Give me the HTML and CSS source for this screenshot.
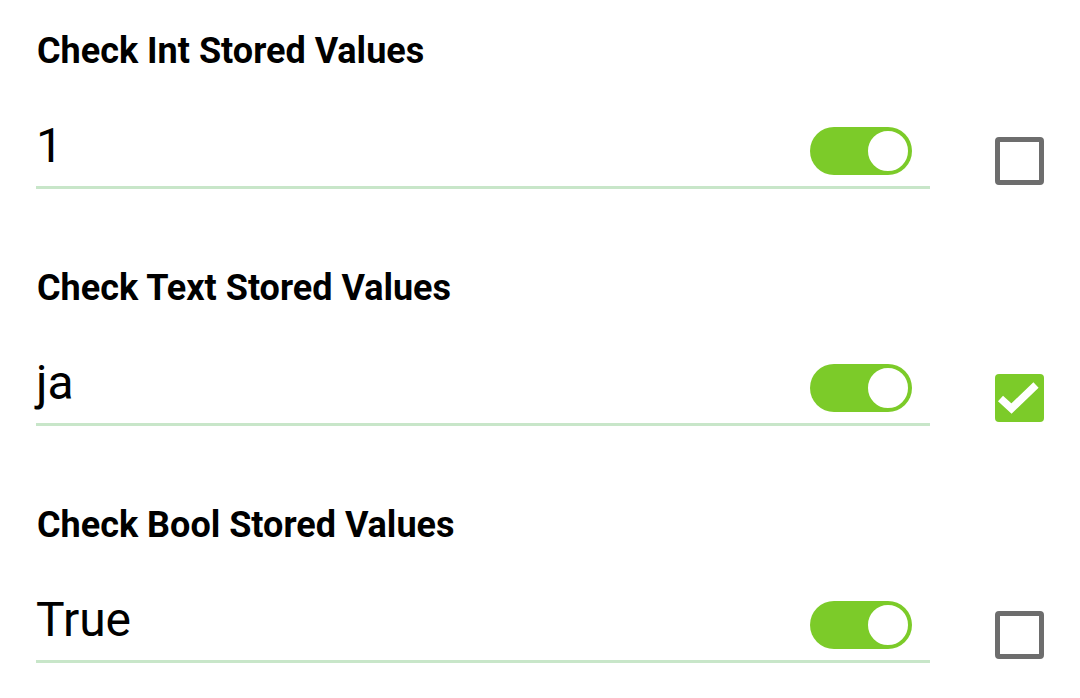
FILE: index.html
```html
<!DOCTYPE html>
<html>
<head>
<meta charset="utf-8">
<link rel="stylesheet" href="styles.css">
</head>
<body>
<div class="page">
  <section class="group">
    <div class="label">Check Int Stored Values</div>
    <div class="row">
      <div class="field">
        <span class="value">1</span>
        <span class="toggle"><span class="knob"></span></span>
      </div>
      <span class="check"></span>
    </div>
  </section>
  <section class="group">
    <div class="label">Check Text Stored Values</div>
    <div class="row">
      <div class="field">
        <span class="value">ja</span>
        <span class="toggle"><span class="knob"></span></span>
      </div>
      <span class="check checked">
        <svg viewBox="0 0 49 48" width="49" height="48"><path d="M5.5 24.5 L16.5 34.5 L41 11" fill="none" stroke="#fff" stroke-width="7.5" stroke-linejoin="miter"/></svg>
      </span>
    </div>
  </section>
  <section class="group">
    <div class="label">Check Bool Stored Values</div>
    <div class="row">
      <div class="field">
        <span class="value">True</span>
        <span class="toggle"><span class="knob"></span></span>
      </div>
      <span class="check"></span>
    </div>
  </section>
</div>
</body>
</html>
```
FILE: styles.css
```css
html, body {
  margin: 0;
  padding: 0;
  background: #ffffff;
}
.page {
  padding-left: 36px;
  font-family: Roboto, "Liberation Sans", sans-serif;
  color: #000;
}
.group {
  height: 237px;
  display: flex;
  flex-direction: column;
}
.label {
  font-weight: bold;
  font-size: 36px;
  line-height: 42px;
  padding-top: 30px;
  padding-left: 1px;
}
.row {
  display: flex;
  align-items: flex-end;
  margin-top: 44px;
}
.field {
  width: 894px;
  height: 70px;
  border-bottom: 3px solid #c8e6c9;
  display: flex;
  align-items: flex-start;
  justify-content: space-between;
}
.value {
  font-size: 48px;
  line-height: 56px;
  margin-top: 2px;
}
.toggle {
  position: relative;
  width: 102px;
  height: 48px;
  border-radius: 24px;
  background: #7ccb29;
  margin-right: 18px;
  margin-top: 11px;
}
.knob {
  position: absolute;
  right: 2px;
  top: 2px;
  width: 40px;
  height: 40px;
  border-radius: 50%;
  background: #fff;
  border: 2px solid #7ccb29;
}
.check {
  width: 39px;
  height: 38px;
  border: 5px solid #6d6d6d;
  border-radius: 4px;
  margin-left: 65px;
  margin-bottom: 4px;
  display: flex;
}
.check.checked {
  border: none;
  width: 49px;
  height: 48px;
  background: #7ccb29;
  overflow: hidden;
}
```
